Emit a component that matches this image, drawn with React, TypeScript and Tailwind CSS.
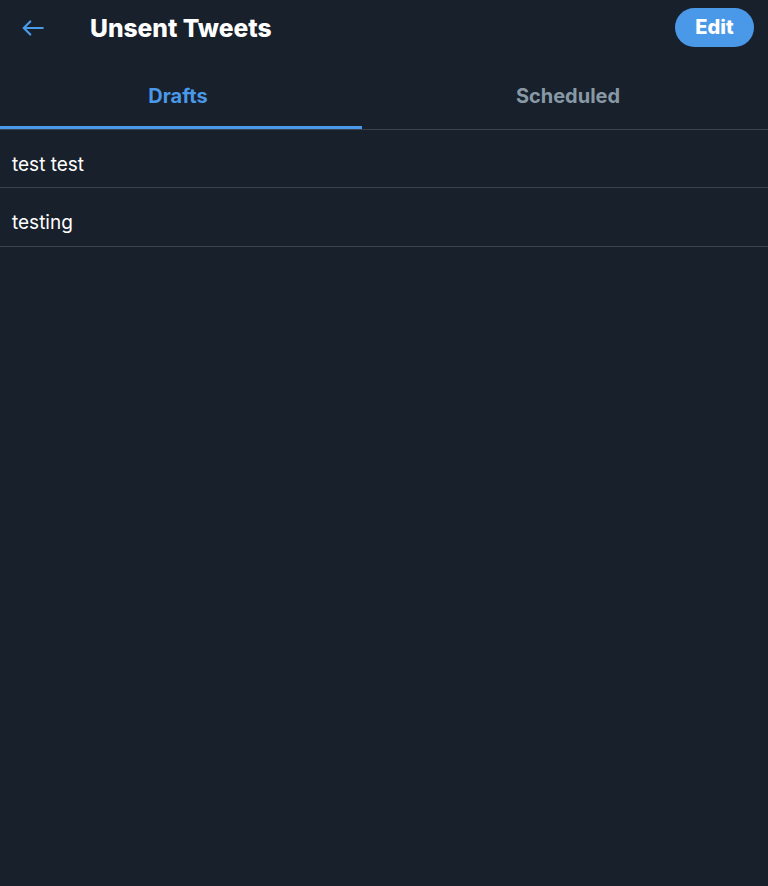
import React from "react";

export default function App() {
  return (
    <div
      className="w-[768px] h-[886px] bg-[#18202b] text-white overflow-hidden"
      style={{ fontFamily: "Inter, 'Noto Sans', sans-serif" }}
    >
      <div className="h-[56px] flex items-center pl-[20px] pr-[14px]">
        <svg width="26" height="26" viewBox="0 0 24 24" fill="none" stroke="#4a9be9" strokeWidth="2" strokeLinecap="round" strokeLinejoin="round">
          <path d="M21 12H3.5" />
          <path d="M9.5 6l-6 6 6 6" />
        </svg>
        <div className="ml-[44px] mt-[1px] text-[24.6px] font-extrabold tracking-[0px]">Unsent Tweets</div>
        <div className="flex-1" />
        <button className="h-[39px] w-[79px] rounded-full bg-[#4a99e9] text-white text-[20px] font-extrabold mt-[-2px]">
          Edit
        </button>
      </div>
      <div className="h-[74px] flex border-b border-[#38444d]">
        <div className="w-[362px] flex items-center justify-center relative pr-[6px] pt-[6px]">
          <span className="text-[#4a99e9] text-[20px] font-bold">Drafts</span>
          <div className="absolute left-0 right-0 bottom-0 h-[3px] bg-[#4a99e9]" />
        </div>
        <div className="flex-1 flex items-center justify-center pl-[6px] pt-[6px]">
          <span className="text-[#8899a6] text-[20px] font-bold">Scheduled</span>
        </div>
      </div>
      <div className="h-[58px] flex items-center px-[12px] pt-[13px] border-b border-[#38444d] text-[19px]">test test</div>
      <div className="h-[59px] flex items-center px-[12px] pt-[13px] border-b border-[#38444d] text-[19px]">testing</div>
    </div>
  );
}
